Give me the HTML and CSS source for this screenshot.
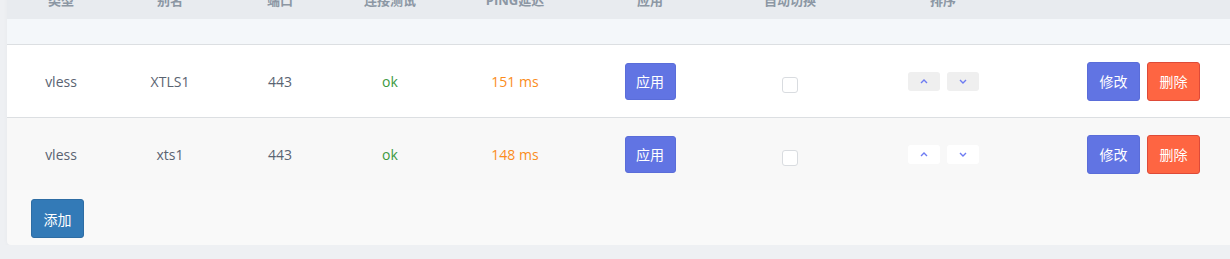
FILE: index.html
```html
<!DOCTYPE html>
<html lang="zh">
<head>
<meta charset="utf-8">
<link rel="stylesheet" href="styles.css">
</head>
<body>
<div class="card">
  <div class="row head">
    <div class="cell">类型</div>
    <div class="cell">别名</div>
    <div class="cell">端口</div>
    <div class="cell">连接测试</div>
    <div class="cell">PING延迟</div>
    <div class="cell">应用</div>
    <div class="cell">自动切换</div>
    <div class="cell">排序</div>
    <div class="cell"></div>
  </div>
  <div class="blank"></div>
  <div class="row item first">
    <div class="cell">vless</div>
    <div class="cell">XTLS1</div>
    <div class="cell">443</div>
    <div class="cell ok">ok</div>
    <div class="cell ping">151 ms</div>
    <div class="cell"><button class="btn primary apply">应用</button></div>
    <div class="cell"><input type="checkbox" class="check"></div>
    <div class="cell sort">
      <button class="sbtn"><svg width="8" height="5" viewBox="0 0 8 5"><polyline points="1,4 4,1 7,4" fill="none" stroke="#6d7bf2" stroke-width="1.4"/></svg></button>
      <button class="sbtn"><svg width="8" height="5" viewBox="0 0 8 5"><polyline points="1,1 4,4 7,1" fill="none" stroke="#6d7bf2" stroke-width="1.4"/></svg></button>
    </div>
    <div class="cell actions">
      <button class="btn primary">修改</button>
      <button class="btn danger">删除</button>
    </div>
  </div>
  <div class="row item second">
    <div class="cell">vless</div>
    <div class="cell">xts1</div>
    <div class="cell">443</div>
    <div class="cell ok">ok</div>
    <div class="cell ping">148 ms</div>
    <div class="cell"><button class="btn primary apply">应用</button></div>
    <div class="cell"><input type="checkbox" class="check"></div>
    <div class="cell sort">
      <button class="sbtn"><svg width="8" height="5" viewBox="0 0 8 5"><polyline points="1,4 4,1 7,4" fill="none" stroke="#6d7bf2" stroke-width="1.4"/></svg></button>
      <button class="sbtn"><svg width="8" height="5" viewBox="0 0 8 5"><polyline points="1,1 4,4 7,1" fill="none" stroke="#6d7bf2" stroke-width="1.4"/></svg></button>
    </div>
    <div class="cell actions">
      <button class="btn primary">修改</button>
      <button class="btn danger">删除</button>
    </div>
  </div>
  <div class="footer">
    <button class="btn add">添加</button>
  </div>
</div>
</body>
</html>
```
FILE: styles.css
```css
html, body {
  margin: 0;
  padding: 0;
  background: #eef0f3;
  font-family: "Open Sans", "Noto Sans CJK SC", sans-serif;
  font-size: 14px;
  color: #5a6371;
  overflow: hidden;
}
body {
  padding-left: 7px;
}
.card {
  margin-top: -21px;
  background: #f9f9f9;
  border-bottom-left-radius: 4px;
  box-shadow: 0 2px 4px rgba(0, 0, 0, 0.03);
}
.row {
  display: grid;
  grid-template-columns: 108px 110px 110px 110px 140px 130px 150px 156px 1fr;
  align-items: center;
}
.cell {
  display: flex;
  justify-content: center;
  align-items: center;
}
.head {
  height: 40px;
  background: #e8ebef;
  font-size: 13px;
  font-weight: bold;
  color: #8c97a4;
}
.blank {
  height: 25px;
  background: #f4f7fa;
  border-bottom: 1px solid #dcdfe2;
}
.item {
  height: 72px;
}
.first {
  background: #ffffff;
  border-bottom: 1px solid #dcdfe2;
}
.second {
  background: #f8f8f8;
}
.ok {
  color: #3d9a3f;
}
.ping {
  color: #fb8c1c;
}
.btn {
  font-family: "Open Sans", "Noto Sans CJK SC", sans-serif;
  font-size: 14px;
  color: #ffffff;
  border-radius: 3px;
  padding: 0;
  width: 53px;
  height: 39px;
  cursor: pointer;
}
.primary {
  background: #6174e3;
  border: 1px solid #5a6dd9;
}
.apply {
  width: 51px;
  height: 37px;
}
.danger {
  background: #fe6542;
  border: 1px solid #de4a38;
}
.check {
  appearance: none;
  -webkit-appearance: none;
  width: 16px;
  height: 16px;
  margin: 7px 0 0 0;
  border: 1px solid #d9dce0;
  border-radius: 3px;
  background: #ffffff;
}
.sort {
  gap: 7px;
}
.sbtn {
  width: 32px;
  height: 19px;
  padding: 0;
  border: none;
  border-radius: 3px;
  background: #efefef;
  display: flex;
  align-items: center;
  justify-content: center;
}
.second .sbtn {
  background: #ffffff;
}
.actions {
  justify-content: flex-end;
  gap: 7px;
  padding-right: 30px;
}
.footer {
  padding: 9px 0 7px 24px;
}
.add {
  background: #337ab7;
  border: 1px solid #2e6da4;
}
```
